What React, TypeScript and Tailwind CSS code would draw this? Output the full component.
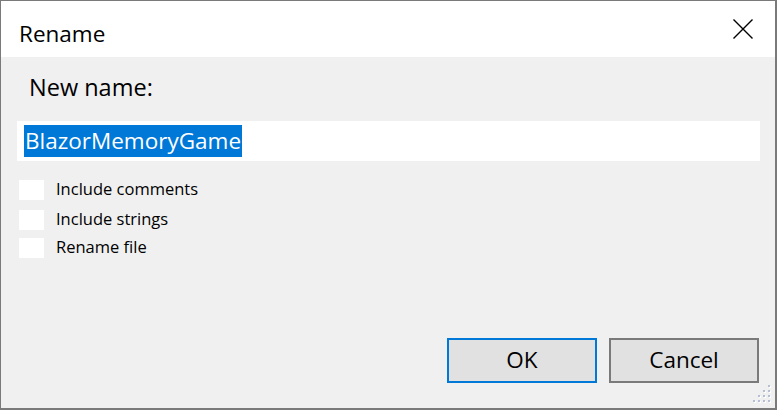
const options = ['Include comments', 'Include strings', 'Rename file'];

function ResizeGrip() {
  // dotted triangle in the bottom-right corner
  const dots: [number, number][] = [];
  for (let row = 0; row < 4; row++) {
    for (let col = 3 - row; col < 4; col++) {
      dots.push([col * 5, row * 5]);
    }
  }
  return (
    <svg width="18" height="18" viewBox="0 0 18 18" className="absolute right-[4px] bottom-[5px]">
      {dots.map(([x, y]) => (
        <g key={`${x}-${y}`}>
          <rect x={x + 1} y={y + 1} width="2" height="2" fill="#ffffff" />
          <rect x={x} y={y} width="2" height="2" fill="#b4bfd4" />
        </g>
      ))}
    </svg>
  );
}

export default function App() {
  return (
    <div className="w-[780px] h-[413px] bg-white" style={{ fontFamily: '"Open Sans", "Noto Sans", sans-serif' }}>
      <div className="relative w-[777px] h-[410px] border-l border-t border-r-2 border-b-2 border-[#7a7a7a] flex flex-col bg-[#f0f0f0] text-black">
        {/* Title bar */}
        <div className="h-[56px] shrink-0 bg-white flex items-start justify-between pl-[18px] pr-[22px]">
          <span className="mt-[22px] text-[22.5px] leading-none">Rename</span>
          <svg width="20" height="20" viewBox="0 0 20 20" className="mt-[18px]">
            <path d="M0.5 0.5 L19.5 19.5 M19.5 0.5 L0.5 19.5" stroke="#000" strokeWidth="1.4" fill="none" />
          </svg>
        </div>

        {/* Content */}
        <div className="flex-1 flex flex-col">
          <div className="pl-[28px] pt-[19px] text-[23.5px] leading-none">New name:</div>

          <div className="mt-[21px] ml-[16px] w-[743px] h-[40px] bg-white flex items-center pl-[7px]">
            <span className="h-[32px] bg-[#0078d7] text-white text-[22.5px] leading-[32px] pl-[1px] pr-[1px]">
              BlazorMemoryGame
            </span>
          </div>

          <div className="mt-[19px] ml-[18px] flex flex-col gap-[8px]">
            {options.map((label, i) => (
              <div key={label} className={`flex items-center gap-[12px] h-[20px] ${i === 1 ? 'mt-[2px]' : ''}`}>
                <div className="w-[25px] h-[20px] bg-white" />
                <span className="text-[16.5px] leading-none">{label}</span>
              </div>
            ))}
          </div>

          <div className="mt-auto mb-[25px] flex justify-end gap-[12px] pr-[16px]">
            <button className="w-[150px] h-[45px] border-2 border-[#0078d7] bg-[#e1e1e1] text-[22.5px] leading-none">OK</button>
            <button className="w-[150px] h-[45px] border-2 border-[#7a7a7a] bg-[#e1e1e1] text-[22.5px] leading-none">Cancel</button>
          </div>
        </div>

        <ResizeGrip />
      </div>
    </div>
  );
}
